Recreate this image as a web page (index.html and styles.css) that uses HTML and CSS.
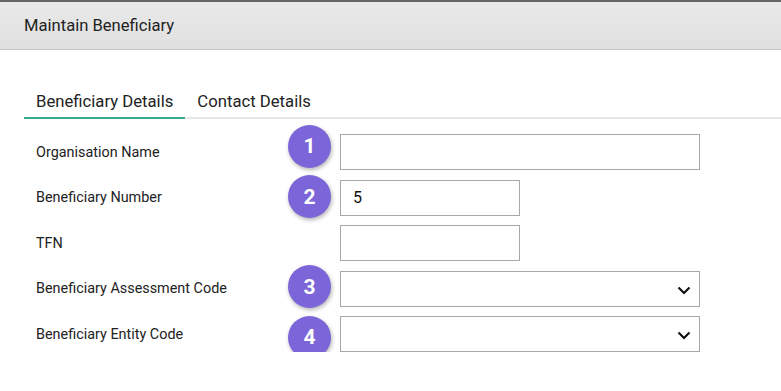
FILE: index.html
```html
<!DOCTYPE html>
<html>
<head>
<meta charset="utf-8">
<link rel="stylesheet" href="styles.css">
</head>
<body>
<div class="topbar"></div>
<header class="header"><span class="title">Maintain Beneficiary</span></header>
<nav class="tabs">
  <div class="tab active">Beneficiary Details</div>
  <div class="tab">Contact Details</div>
</nav>
<form class="form">
  <div class="row">
    <label class="label">Organisation Name</label>
    <div class="field">
      <span class="badge b1">1</span>
      <div class="input wide"></div>
    </div>
  </div>
  <div class="row">
    <label class="label">Beneficiary Number</label>
    <div class="field">
      <span class="badge b2">2</span>
      <div class="input narrow">5</div>
    </div>
  </div>
  <div class="row">
    <label class="label">TFN</label>
    <div class="field">
      <div class="input narrow"></div>
    </div>
  </div>
  <div class="row">
    <label class="label">Beneficiary Assessment Code</label>
    <div class="field">
      <span class="badge b3">3</span>
      <div class="input wide select">
        <svg class="chev" width="14" height="9" viewBox="0 0 14 9"><path d="M1.5 1.5 L7 7 L12.5 1.5" fill="none" stroke="#111" stroke-width="2.2"/></svg>
      </div>
    </div>
  </div>
  <div class="row">
    <label class="label">Beneficiary Entity Code</label>
    <div class="field">
      <span class="badge b4">4</span>
      <div class="input wide select">
        <svg class="chev" width="14" height="9" viewBox="0 0 14 9"><path d="M1.5 1.5 L7 7 L12.5 1.5" fill="none" stroke="#111" stroke-width="2.2"/></svg>
      </div>
    </div>
  </div>
</form>
</body>
</html>
```
FILE: styles.css
```css
* { box-sizing: border-box; }
body {
  margin: 0;
  font-family: Roboto, "Liberation Sans", sans-serif;
  color: #222;
  background: #fff;
}
.topbar { height: 2px; background: #666; }
.header {
  height: 48px;
  background: linear-gradient(#e9e9e9, #e0e0e0);
  border-bottom: 1px solid #c6c6c6;
  padding-left: 24px;
  display: flex;
  align-items: center;
}
.title { font-size: 16.6px; color: #222; }
.tabs {
  display: flex;
  margin: 35px 0 0 24px;
  border-bottom: 2px solid #e8e8e8;
}
.tab {
  font-size: 16.7px;
  padding: 0 12px;
  height: 34px;
  line-height: 34px;
  margin-bottom: -2px;
  border-bottom: 2px solid transparent;
  color: #222;
}
.tab.active { border-bottom-color: #3aaa8c; }
.form {
  margin-top: 15px;
  display: flex;
  flex-direction: column;
  gap: 9.5px;
}
.row {
  display: flex;
  align-items: center;
  height: 36px;
}
.label {
  width: 340px;
  padding-left: 36px;
  font-size: 14.4px;
  color: #222;
}
.field { position: relative; height: 36px; }
.input {
  height: 36px;
  border: 1px solid #a8a8a8;
  background: #fff;
  font-size: 16px;
  line-height: 34px;
  padding-left: 12px;
  color: #111;
}
.wide { width: 360px; }
.narrow { width: 180px; }
.select { position: relative; }
.chev { position: absolute; right: 8px; top: 14px; }
.badge {
  position: absolute;
  left: -52px;
  width: 43px;
  height: 43px;
  border-radius: 50%;
  background: #7b65d8;
  color: #fff;
  font-size: 21px;
  font-weight: 700;
  display: flex;
  align-items: center;
  justify-content: center;
  box-shadow: 1px 2px 4px rgba(0,0,0,0.3);
}
.b1 { top: -9.5px; }
.b2 { top: -4.5px; }
.b3 { top: -5.5px; }
.b4 { top: -0.5px; }
```
